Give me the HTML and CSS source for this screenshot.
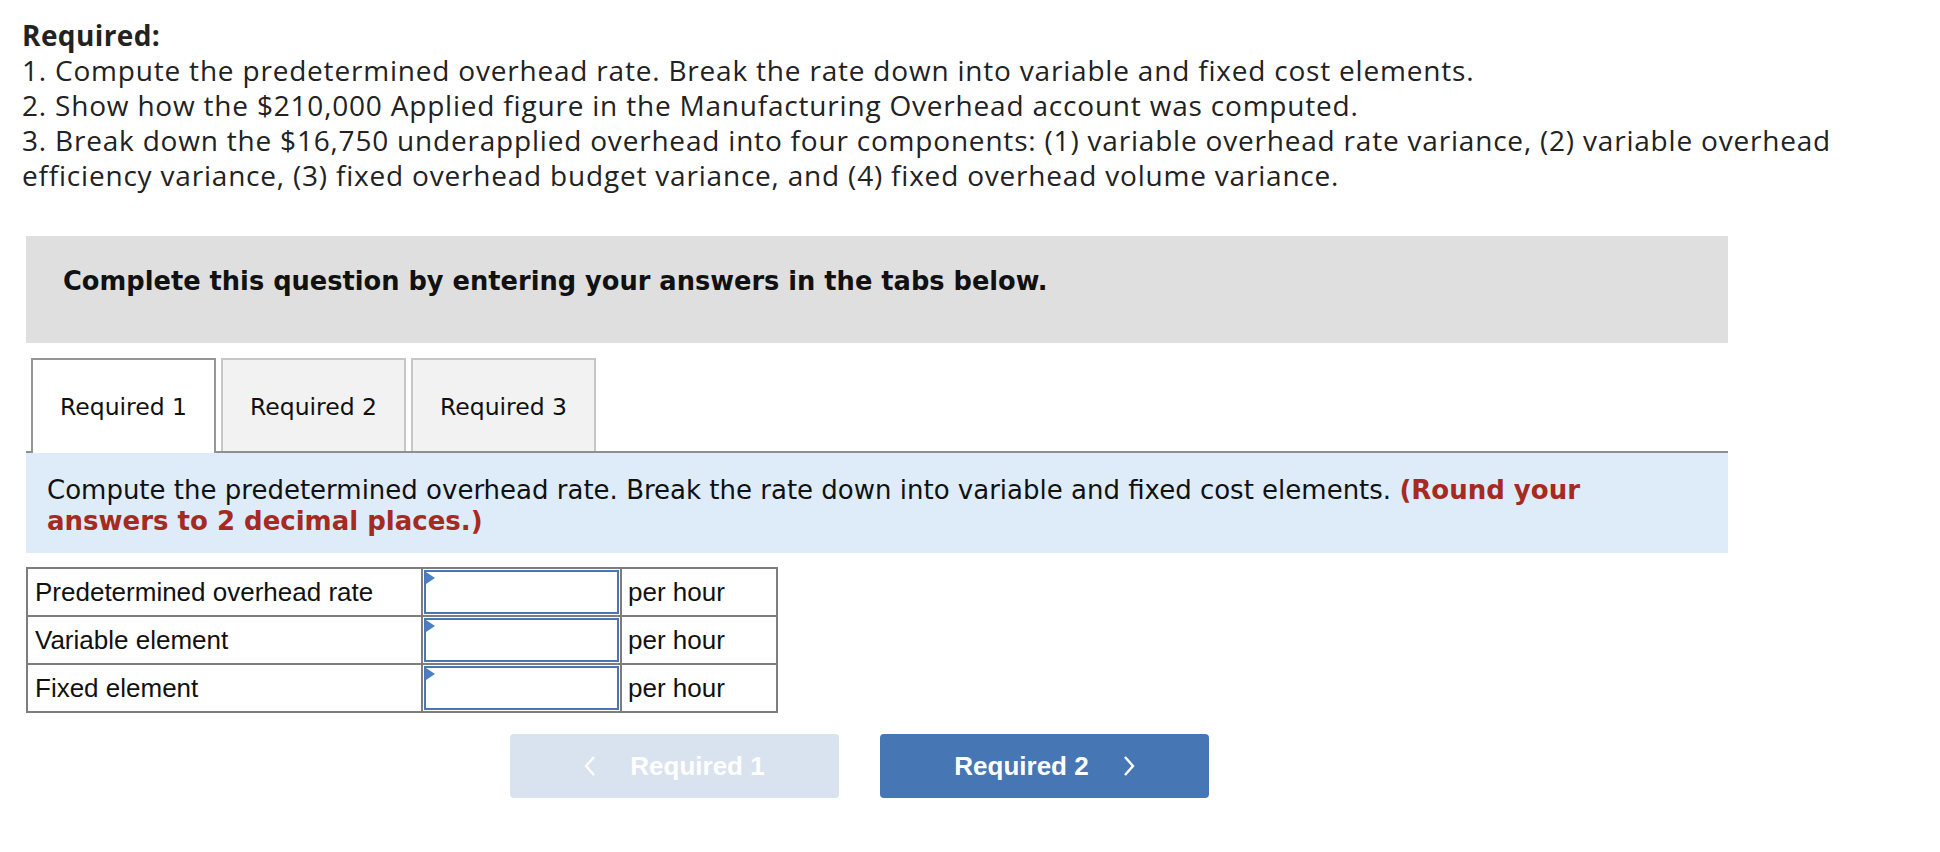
FILE: index.html
```html
<!DOCTYPE html>
<html>
<head>
<meta charset="utf-8">
<link rel="stylesheet" href="styles.css">
</head>
<body>
<div class="page">
  <div class="required">
    <p class="req-title">Required:</p>
    <p>1. Compute the predetermined overhead rate. Break the rate down into variable and fixed cost elements.</p>
    <p>2. Show how the $210,000 Applied figure in the Manufacturing Overhead account was computed.</p>
    <p>3. Break down the $16,750 underapplied overhead into four components: (1) variable overhead rate variance, (2) variable overhead<br>efficiency variance, (3) fixed overhead budget variance, and (4) fixed overhead volume variance.</p>
  </div>

  <div class="complete-bar">Complete this question by entering your answers in the tabs below.</div>

  <div class="tabs">
    <div class="tab active">Required 1</div>
    <div class="tab">Required 2</div>
    <div class="tab">Required 3</div>
  </div>

  <div class="prompt">Compute the predetermined overhead rate. Break the rate down into variable and fixed cost elements. <strong class="round">(Round your</strong><br><strong class="round">answers to 2 decimal places.)</strong></div>

  <table class="answers">
    <tr>
      <td class="label">Predetermined overhead rate</td>
      <td class="entry"><div class="input"><span class="flag"></span></div></td>
      <td class="unit">per hour</td>
    </tr>
    <tr>
      <td class="label">Variable element</td>
      <td class="entry"><div class="input"><span class="flag"></span></div></td>
      <td class="unit">per hour</td>
    </tr>
    <tr>
      <td class="label">Fixed element</td>
      <td class="entry"><div class="input"><span class="flag"></span></div></td>
      <td class="unit">per hour</td>
    </tr>
  </table>

  <div class="nav">
    <div class="btn prev">
      <svg class="chev" width="12" height="22" viewBox="0 0 12 22"><polyline points="10,2 2,11 10,20" fill="none" stroke="#fff" stroke-width="2.4"/></svg>
      <span>Required 1</span>
    </div>
    <div class="btn next">
      <span>Required 2</span>
      <svg class="chev" width="12" height="22" viewBox="0 0 12 22"><polyline points="2,2 10,11 2,20" fill="none" stroke="#fff" stroke-width="2.4"/></svg>
    </div>
  </div>
</div>
</body>
</html>
```
FILE: styles.css
```css
html, body { margin: 0; padding: 0; background: #fff; }
body { width: 1940px; color: #1f1f1f; }
.page { padding: 18px 0 0 0; }
.required { padding-left: 22px; font-family: "Open Sans", "Liberation Sans", sans-serif; font-size: 28px; letter-spacing: 0.8px; line-height: 35px; color: #222; }
.required p { margin: 0; }
.req-title { font-weight: 700; letter-spacing: 0.4px; }
.complete-bar { margin: 43px 0 0 26px; width: 1702px; height: 107px; background: #dfdfdf; box-sizing: border-box; padding: 29px 0 0 37px; font-family: "DejaVu Sans", Verdana, sans-serif; font-weight: 700; font-size: 25.7px; line-height: 32px; color: #111; }
.tabs { display: flex; gap: 5px; margin: 15px 0 0 31px; height: 93px; position: relative; z-index: 1; }
.tab { width: 185px; box-sizing: border-box; border: 2px solid #c6c6c6; border-bottom: none; background: #f2f2f2; font-family: "DejaVu Sans", Verdana, sans-serif; font-size: 23.5px; color: #111; text-align: center; padding-top: 33px; }
.tab.active { background: #fff; border-color: #959595; height: 95px; }
.prompt { margin-left: 26px; width: 1702px; box-sizing: border-box; border-top: 2px solid #8f8f8f; background: #deebf8; padding: 22px 30px 16px 21px; font-family: "DejaVu Sans", Verdana, sans-serif; font-size: 26px; line-height: 31px; color: #111; }
.round { color: #a52a20; }
.answers { margin: 14px 0 0 26px; border-collapse: collapse; font-family: "Liberation Sans", Arial, sans-serif; font-size: 26px; color: #111; }
.answers td { border: 2px solid #7d7d7d; height: 46px; padding: 0; }
.label { width: 386px; padding-left: 7px !important; }
.entry { width: 197px; padding: 0 !important; }
.unit { width: 148px; padding-left: 6px !important; }
.input { position: relative; height: 44px; margin: 0 1px; border: 2px solid #4a78b5; background: #fff; box-sizing: border-box; }
.flag { position: absolute; left: 0; top: 0; width: 0; height: 0; border-top: 6px solid transparent; border-bottom: 6px solid transparent; border-left: 9px solid #4a7fc1; }
.nav { display: flex; gap: 41px; margin: 21px 0 0 510px; }
.btn { width: 329px; height: 64px; border-radius: 4px; display: flex; align-items: center; justify-content: center; gap: 34px; font-family: "Liberation Sans", Arial, sans-serif; font-weight: 700; font-size: 26px; color: #fff; }
.prev { background: #d9e3ef; }
.next { background: #4676b4; }
```
